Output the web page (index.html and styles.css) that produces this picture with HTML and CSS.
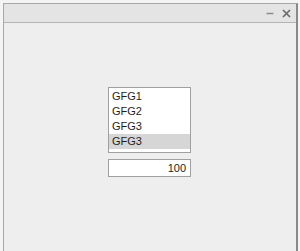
FILE: index.html
```html
<!DOCTYPE html>
<html lang="en">
<head>
    <meta charset="UTF-8">
    <title>GFG</title>
    <link rel="stylesheet" href="styles.css">
</head>
<body>
    <div class="window">
        <div class="titlebar">
            <svg class="btn" width="8" height="8" viewBox="0 0 8 8">
                <line x1="0.5" y1="4.5" x2="7.5" y2="4.5" stroke="#8c8c8c" stroke-width="1.5"/>
            </svg>
            <svg class="btn" width="9" height="9" viewBox="0 0 9 9">
                <path d="M1 1 L8 8 M8 1 L1 8" stroke="#6a6a6a" stroke-width="1.7" fill="none"/>
            </svg>
        </div>
        <div class="content">
            <div class="list">
                <div class="item">GFG1</div>
                <div class="item">GFG2</div>
                <div class="item">GFG3</div>
                <div class="item selected">GFG3</div>
            </div>
            <div class="field">100</div>
        </div>
    </div>
</body>
</html>
```
FILE: styles.css
```css
body {
    margin: 0;
    padding: 3px 2px 0 3px;
    background-color: #f4f4f4;
    font-family: 'Liberation Sans', Arial, sans-serif;
}

.window {
    height: 248px;
    border: 1px solid #a8a8a8;
    border-bottom: none;
    border-right: 2px solid #8a8a8a;
    background-color: #eeeeee;
    box-sizing: border-box;
}

.titlebar {
    height: 18px;
    background-color: #e4e4e4;
    border-bottom: 1px solid #b4b4b4;
    display: flex;
    justify-content: flex-end;
    align-items: center;
    gap: 8px;
    padding-right: 5px;
}

.btn {
    display: block;
}

.content {
    padding-top: 64px;
    padding-left: 104px;
}

.list {
    width: 83px;
    height: 66px;
    border: 1px solid #a0a0a0;
    background-color: #ffffff;
    box-sizing: border-box;
    padding-top: 1px;
}

.item {
    height: 15px;
    line-height: 15px;
    font-size: 11px;
    padding-left: 3px;
    color: #1e1e1e;
}

.selected {
    background-color: #d6d6d6;
}

.field {
    width: 83px;
    height: 18px;
    margin-top: 6px;
    border: 1px solid #a0a0a0;
    background-color: #ffffff;
    box-sizing: border-box;
    text-align: right;
    font-size: 11px;
    line-height: 16px;
    padding-right: 4px;
    color: #1e1e1e;
}
```
